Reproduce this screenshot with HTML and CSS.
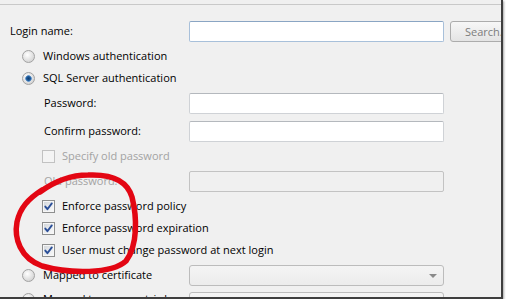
FILE: index.html
```html
<!DOCTYPE html>
<html>
<head>
<meta charset="utf-8">
<link rel="stylesheet" href="styles.css">
</head>
<body>
<div class="frame">
  <div class="panel">
    <div class="row field">
      <div class="lead l0">Login name:</div>
      <div class="box focus"></div>
      <div class="btn">Search...</div>
    </div>
    <div class="row check">
      <div class="lead l1"><span class="radio"></span>Windows authentication</div>
    </div>
    <div class="row check">
      <div class="lead l1"><span class="radio on"></span>SQL Server authentication</div>
    </div>
    <div class="row field">
      <div class="lead l2">Password:</div>
      <div class="box"></div>
    </div>
    <div class="row field">
      <div class="lead l2">Confirm password:</div>
      <div class="box"></div>
    </div>
    <div class="row check">
      <div class="lead l2c disabled"><span class="cb off"></span>Specify old password</div>
    </div>
    <div class="row field">
      <div class="lead l2 disabled">Old password:</div>
      <div class="box disabled"></div>
    </div>
    <div class="row check">
      <div class="lead l2c"><span class="cb"><svg viewBox="0 0 11 11" width="11" height="11"><path d="M2.3 5.6 L4.4 8.2 L8.8 2.4" /></svg></span>Enforce password policy</div>
    </div>
    <div class="row check">
      <div class="lead l2c"><span class="cb"><svg viewBox="0 0 11 11" width="11" height="11"><path d="M2.3 5.6 L4.4 8.2 L8.8 2.4" /></svg></span>Enforce password expiration</div>
    </div>
    <div class="row check">
      <div class="lead l2c"><span class="cb"><svg viewBox="0 0 11 11" width="11" height="11"><path d="M2.3 5.6 L4.4 8.2 L8.8 2.4" /></svg></span>User must change password at next login</div>
    </div>
    <div class="row field">
      <div class="lead l1"><span class="radio"></span>Mapped to certificate</div>
      <div class="box combo"><span class="arrow"></span></div>
    </div>
    <div class="row field last">
      <div class="lead l1"><span class="radio"></span>Mapped to asymmetric key</div>
      <div class="box combo"><span class="arrow"></span></div>
    </div>
  </div>
  <svg class="annot" width="506" height="303" viewBox="0 0 506 303">
    <path d="M40 192 C55 181 70 175 88 175 C110 174 127 180 132 197 C137 217 138 245 126 261 C112 274 70 274 42 266 C20 258 14 238 17 222 C20 208 28 199 42 190" />
  </svg>
</div>
</body>
</html>
```

FILE: styles.css
```css
html, body {
  margin: 0;
  padding: 0;
  background: #ffffff;
}

.frame {
  position: relative;
  width: 501px;
  height: 297px;
  overflow: hidden;
  background: #f0f0f0;
  border-right: 2px solid #3e3e3e;
  border-bottom: 2px solid #3e3e3e;
  box-shadow: 1px 1px 2px rgba(0, 0, 0, 0.35);
  font-family: "Open Sans", "Noto Sans", sans-serif;
  font-size: 11px;
  color: #000000;
}

.panel {
  margin-top: 4px;
  border-top: 1px solid #c9c9c9;
  padding-top: 12px;
  display: flex;
  flex-direction: column;
}

.row {
  display: flex;
  align-items: center;
  flex: none;
}

.row.field { height: 28px; }
.row.check { height: 22px; }

.row.last {
  align-items: flex-start;
  padding-top: 3px;
  box-sizing: border-box;
}
.row.last .lead { line-height: 14px; }

.lead {
  display: flex;
  align-items: center;
  white-space: nowrap;
  box-sizing: border-box;
  flex: none;
  line-height: 14px;
}

.row.field .lead { width: 189px; }

.l0 { padding-left: 10px; }
.l1 { padding-left: 22px; }
.l2 { padding-left: 44px; }
.l2c { padding-left: 42px; }

.disabled { color: #a3a3a3; }

.radio {
  width: 13px;
  height: 13px;
  box-sizing: border-box;
  border-radius: 50%;
  border: 1px solid #a2a2a2;
  background: radial-gradient(circle at 40% 35%, #ffffff 0, #e6e6e6 45%, #c8c8c8 100%);
  margin-right: 8px;
  flex: none;
}

.radio.on {
  background:
    radial-gradient(circle, #123e70 0, #1d5a9a 2px, #6a9bd0 3px, rgba(255,255,255,0) 3.6px),
    radial-gradient(circle at 40% 35%, #ffffff 0, #e6e6e6 45%, #c8c8c8 100%);
}

.cb {
  width: 13px;
  height: 13px;
  box-sizing: border-box;
  border: 1px solid #8e8f8f;
  background: linear-gradient(135deg, #cfd3d8 0, #eceef0 60%, #fafafa 100%);
  box-shadow: inset 0 0 0 1px #f6f6f6;
  margin-right: 7px;
  flex: none;
  display: flex;
  align-items: center;
  justify-content: center;
}

.cb svg path {
  fill: none;
  stroke: #2b4f98;
  stroke-width: 1.9;
  stroke-linecap: round;
  stroke-linejoin: round;
}

.cb.off {
  border-color: #c2c2c2;
  background: #f4f4f4;
  box-shadow: none;
}

.box {
  width: 255px;
  height: 21px;
  box-sizing: border-box;
  flex: none;
  background: #ffffff;
  border: 1px solid #cfd2d6;
  border-top-color: #b4b8bd;
  border-radius: 2px;
}

.box.focus {
  border-color: #a8c0da;
  border-top-color: #8aa5c3;
}

.box.disabled {
  background: #f0f0f0;
  border-color: #c3c3c3;
}

.box.combo {
  position: relative;
  background: linear-gradient(#f4f4f4, #ececec);
  border-color: #bcbcbc;
  border-radius: 3px;
}

.arrow {
  position: absolute;
  right: 6px;
  top: 8px;
  width: 0;
  height: 0;
  border-left: 4px solid transparent;
  border-right: 4px solid transparent;
  border-top: 4px solid #8a8a8a;
}

.btn {
  margin-left: 6px;
  width: 80px;
  height: 21px;
  box-sizing: border-box;
  flex: none;
  border: 1px solid #acacac;
  border-radius: 3px;
  background: linear-gradient(#f7f7f7, #e4e4e4);
  color: #7c7c7c;
  padding-left: 14px;
  line-height: 19px;
  white-space: nowrap;
}

.annot {
  position: absolute;
  left: 0;
  top: 0;
  pointer-events: none;
}

.annot path {
  fill: none;
  stroke: #e30613;
  stroke-width: 5.5;
  stroke-linecap: round;
  stroke-linejoin: round;
}
```
